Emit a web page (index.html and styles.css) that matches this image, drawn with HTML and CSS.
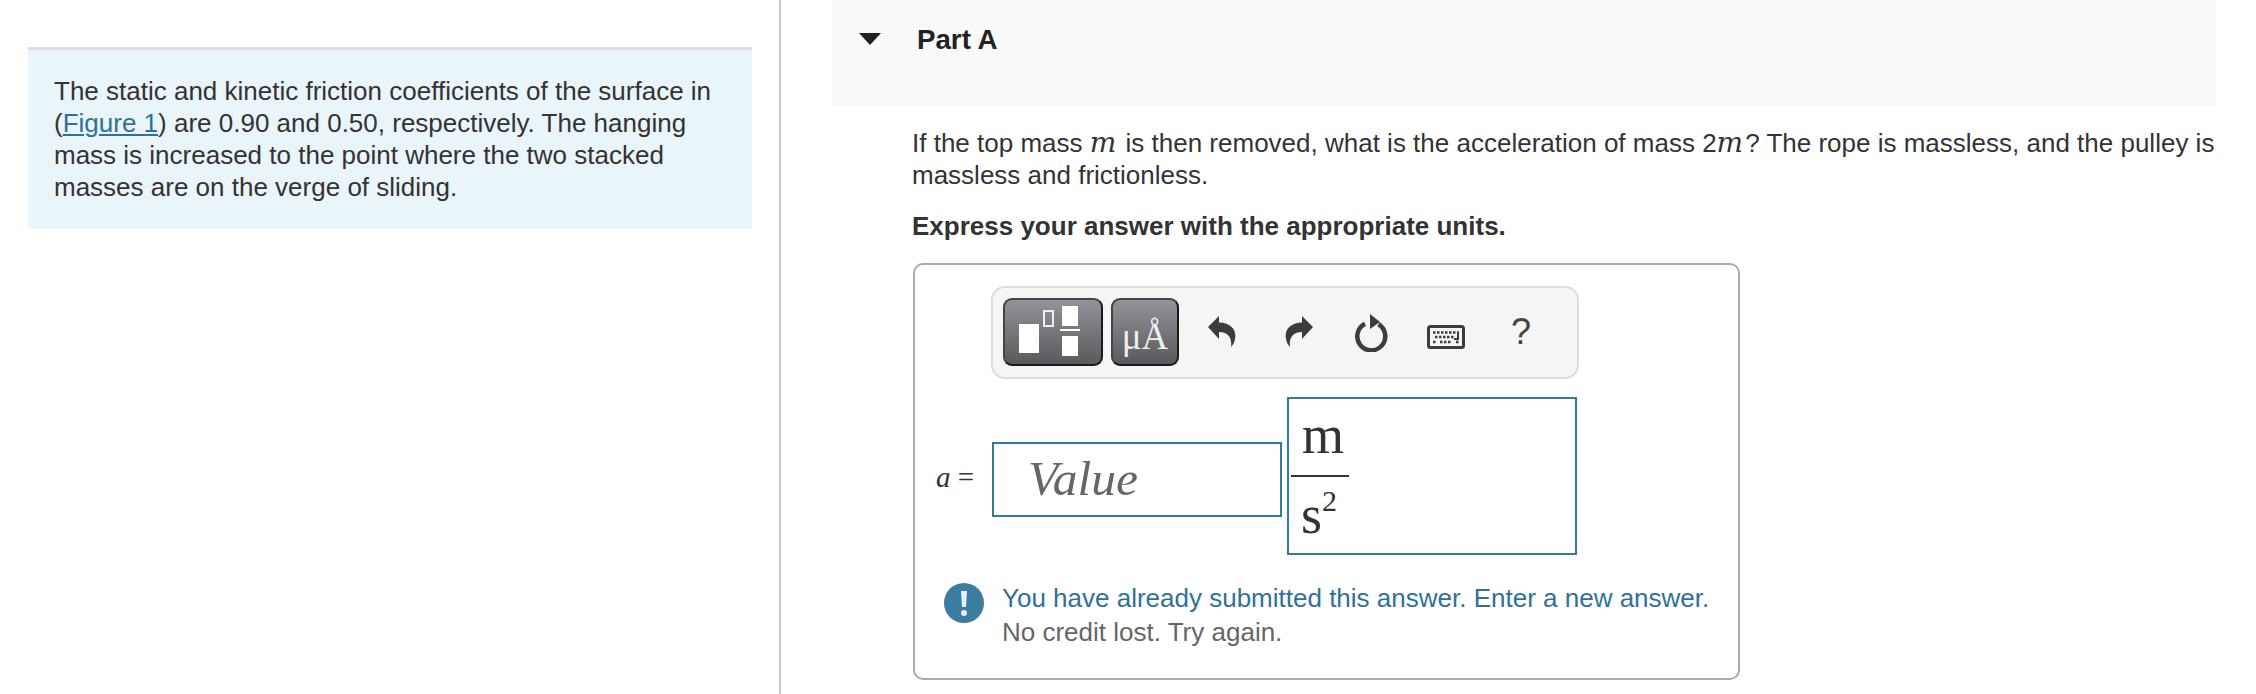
FILE: index.html
```html
<!DOCTYPE html>
<html lang="en">
<head>
<meta charset="utf-8">
<title>Part A</title>
<link rel="stylesheet" href="styles.css">
</head>
<body>
<div class="page">
  <aside class="left">
    <div class="context">The static and kinetic friction coefficients of the surface in (<a class="link" href="#">Figure 1</a>) are 0.90 and 0.50, respectively. The hanging mass is increased to the point where the two stacked masses are on the verge of sliding.</div>
  </aside>
  <main class="right">
    <header class="part-head">
      <svg class="caret" width="22" height="12" viewBox="0 0 22 12"><path d="M0 0H22L11 12Z" fill="#222"/></svg>
      <span class="part-title">Part A</span>
    </header>
    <section class="body">
      <p class="question">If the top mass <i class="math">m</i> is then removed, what is the acceleration of mass 2<i class="math">m</i>? The rope is massless, and the pulley is massless and frictionless.</p>
      <p class="instruction">Express your answer with the appropriate units.</p>
      <div class="answer">
        <div class="toolbar">
          <div class="tool-btn tool-wide">
            <svg width="96" height="64" viewBox="0 0 96 64"><rect x="14" y="24" width="20" height="29" fill="#fff"/><rect x="39" y="11" width="9" height="15" fill="none" stroke="#eee" stroke-width="2"/><rect x="57" y="6" width="16" height="20" fill="#fff"/><rect x="55" y="29" width="20" height="2" fill="#fff"/><rect x="57" y="36" width="16" height="20" fill="#fff"/></svg>
          </div>
          <div class="tool-btn tool-unit">μÅ</div>
          <div class="tool-icons">
            <svg class="ic-undo" width="28" height="31" viewBox="0 0 28 31"><path d="M0 11 11 0V6.500C22 7 29 13 27 23 26.500 26 25 29 23 31 24 24 22 16 11 16V23Z" fill="#3c3c3c"/></svg>
            <svg class="ic-redo" width="28" height="31" viewBox="0 0 28 31"><path d="M28 11 17 0V6.500C6 7-1 13 1 23 1.500 26 3 29 5 31 4 24 6 16 17 16V23Z" fill="#3c3c3c"/></svg>
            <svg class="ic-reset" width="34" height="38" viewBox="0 0 34 38"><path d="M23.500 10.300A14 14 0 1 1 10 9.800" fill="none" stroke="#3c3c3c" stroke-width="4.500"/><path d="M15 0 25 8 15 15Z" fill="#3c3c3c"/></svg>
            <svg class="ic-keys" width="38" height="24" viewBox="0 0 38 24"><rect x="1.500" y="1.500" width="35" height="21" rx="2" fill="none" stroke="#3c3c3c" stroke-width="3"/><path d="M6 7.500H32M8 12H27M6 17H9M13 17H25M29 17H32" fill="none" stroke="#3c3c3c" stroke-width="2.500" stroke-dasharray="2.500 1.500"/><path d="M31 7V14H27" fill="none" stroke="#3c3c3c" stroke-width="2"/></svg>
            <span class="ic-help">?</span>
          </div>
        </div>
        <div class="equation">
          <span class="eq-label"><i class="eq-var">a</i> =</span>
          <div class="value-box">Value</div>
          <div class="unit-box">
            <div class="fraction">
              <span class="num">m</span>
              <span class="den">s<sup class="exp">2</sup></span>
            </div>
          </div>
        </div>
        <div class="message">
          <svg class="msg-icon" width="40" height="40" viewBox="0 0 40 40"><circle cx="20" cy="20" r="20" fill="#3b7ca0"/><path d="M17 8H23L22 24H18Z" fill="#e8eef2"/><circle cx="20" cy="30" r="3" fill="#e8eef2"/></svg>
          <div class="msg-text">
            <div class="msg-main">You have already submitted this answer. Enter a new answer.</div>
            <div class="msg-sub">No credit lost. Try again.</div>
          </div>
        </div>
      </div>
    </section>
  </main>
</div>
</body>
</html>
```

FILE: styles.css
```css
* { box-sizing: border-box; }
html, body { margin: 0; padding: 0; background: #fff; }
body { font-family: "Liberation Sans", Arial, sans-serif; color: #333; font-size: 26px; }
.page { display: flex; width: 2256px; height: 694px; overflow: hidden; }

.left { width: 781px; flex: none; padding: 47px 27px 0 28px; border-right: 2px solid #bfcbda; }
.context { height: 182px; background: #e9f5f8; border-top: 3px solid #dfdfe1; padding: 25px 26px 0 26px; line-height: 32px; font-size: 26px; }
.link { color: #2f7198; text-decoration: underline; }

.right { flex: 1; padding: 0 40px 0 51px; min-width: 0; }
.part-head { height: 106px; background: #f9f9f9; display: flex; align-items: flex-start; }
.caret { margin: 33px 0 0 27px; }
.part-title { margin: 23px 0 0 36px; font-weight: 700; font-size: 27.700px; line-height: 34px; color: #222; }

.body { padding-left: 80px; }
.question { margin: 21px 0 0; line-height: 32px; font-size: 26px; }
.math { font-family: "DejaVu Serif", serif; font-style: italic; font-size: 28px; letter-spacing: 2px; line-height: 1; }
.instruction { margin: 19px 0 0; font-weight: 700; font-size: 26px; line-height: 32px; }

.answer { width: 827px; height: 417px; margin: 21px 0 0 1px; border: 2px solid #aaa; border-radius: 10px; padding: 21px 0 0 76px; }
.toolbar { width: 588px; height: 93px; background: #f5f5f5; border: 2px solid #ddd; border-radius: 14px; display: flex; align-items: flex-start; padding: 10px 0 0 10px; gap: 8px; }
.tool-btn { height: 68px; border-radius: 9px; border: 2px solid #444; border-bottom-color: #1a1a1a; border-right-color: #1a1a1a; background: linear-gradient(#929298, #5a5a5e); color: #fff; display: flex; align-items: center; justify-content: center; }
.tool-wide { width: 100px; }
.tool-unit { width: 68px; font-family: "Liberation Serif", serif; font-size: 37px; line-height: 1; padding-top: 8px; color: #eee; }
.tool-icons { display: flex; align-items: flex-start; }
.ic-undo { margin: 18px 0 0 21px; }
.ic-redo { margin: 18px 0 0 49px; }
.ic-reset { margin: 16px 0 0 42px; }
.ic-keys { margin: 27px 0 0 38px; }
.ic-help { margin: 14px 0 0 46px; font-size: 36px; line-height: 40px; color: #444; }

.equation { display: flex; align-items: center; margin: 18px 0 0 -56px; height: 158px; }
.eq-label { width: 57px; margin-top: 3px; padding-left: 1px; font-family: "Liberation Serif", serif; font-size: 29px; white-space: nowrap; }
.eq-var { font-style: italic; }
.value-box { width: 290px; height: 75px; margin-top: 6px; border: 2px solid #337a9c; font-family: "Liberation Serif", serif; font-style: italic; font-size: 49.500px; line-height: 70px; color: #666; padding-left: 34px; }
.unit-box { width: 290px; height: 158px; margin-left: 5px; border: 2px solid #337a9c; padding: 0 0 0 2px; }
.fraction { width: 58px; display: flex; flex-direction: column; font-family: "Liberation Serif", serif; font-size: 54px; color: #333; }
.num { height: 78px; line-height: 72px; text-align: center; border-bottom: 2px solid #333; padding-left: 6px; }
.den { line-height: 76px; padding-left: 10px; white-space: nowrap; }
.exp { font-size: 30px; line-height: 0; vertical-align: 22px; }

.message { display: flex; margin: 26px 0 0 -47px; gap: 18px; }
.msg-icon { flex: none; margin-top: 2px; }
.msg-text { line-height: 34px; font-size: 26px; }
.msg-main { color: #2f7198; }
.msg-sub { color: #666; }
```
